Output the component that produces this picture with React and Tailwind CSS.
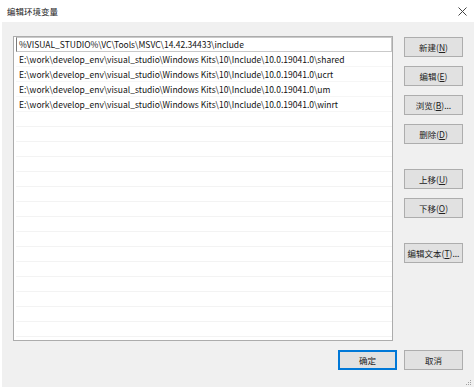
import React from "react";

const paths = [
    "%VISUAL_STUDIO%\\VC\\Tools\\MSVC\\14.42.34433\\include",
    "E:\\work\\develop_env\\visual_studio\\Windows Kits\\10\\Include\\10.0.19041.0\\shared",
    "E:\\work\\develop_env\\visual_studio\\Windows Kits\\10\\Include\\10.0.19041.0\\ucrt",
    "E:\\work\\develop_env\\visual_studio\\Windows Kits\\10\\Include\\10.0.19041.0\\um",
    "E:\\work\\develop_env\\visual_studio\\Windows Kits\\10\\Include\\10.0.19041.0\\winrt",
];

const font = {fontFamily: '"Noto Sans CJK SC", "Noto Sans", sans-serif'};

function Btn({label, hot, rest, className = ""}) {
    return (
        <button
            className={
                "w-[59px] h-[20px] bg-[#e1e1e1] border border-[#adadad] text-[8.5px] leading-none text-[#222] flex items-center justify-center whitespace-nowrap " +
                className
            }
        >
            {label}(<span className="underline">{hot}</span>){rest}
        </button>
    );
}

export default function App() {
    const emptyRows = Array.from({length: 15});

    return (
        <div
            className="w-[474px] h-[389px] bg-white flex flex-col overflow-hidden"
            style={font}
        >
            {/* title bar */}
            <div className="h-[22px] flex items-center justify-between pl-[7px] pr-[7px] shrink-0">
                <span className="text-[8.5px] text-[#222]">编辑环境变量</span>
                <svg width="9" height="9" viewBox="0 0 9 9">
                    <path d="M0.5 0.5 L8.5 8.5 M8.5 0.5 L0.5 8.5" stroke="#444" strokeWidth="1" />
                </svg>
            </div>

            {/* body */}
            <div className="flex-1 bg-[#f0f0f0] flex flex-col pt-[14px] pl-[13px] pr-[11px] mb-[2px] ml-[2px] relative">
                <div className="flex -ml-[2px]">
                    {/* list */}
                    <div className="w-[380px] h-[305px] bg-white border border-[#acacac] overflow-hidden pl-[2px]">
                        <div className="h-[15px] border border-[#c9c9c9] border-l-[#7a7a7a] pl-[2px] flex items-center text-[8.5px] text-[#111] leading-none whitespace-nowrap">
                            {paths[0]}
                        </div>
                        {paths.slice(1).map((p) => (
                            <div
                                key={p}
                                className="h-[15px] pl-[3px] flex items-center text-[8.5px] text-[#111] leading-none whitespace-nowrap border-b border-[#f6f6f6]"
                            >
                                {p}
                            </div>
                        ))}
                        {emptyRows.map((_, i) => (
                            <div key={i} className="h-[15px] border-b border-[#f3f3f3]"></div>
                        ))}
                    </div>

                    {/* side buttons */}
                    <div className="flex flex-col ml-[11px] pt-[1px]">
                        <Btn label="新建" hot="N" />
                        <Btn label="编辑" hot="E" className="mt-[9px]" />
                        <Btn label="浏览" hot="B" rest="..." className="mt-[9px]" />
                        <Btn label="删除" hot="D" className="mt-[9px]" />
                        <Btn label="上移" hot="U" className="mt-[25px]" />
                        <Btn label="下移" hot="O" className="mt-[9px]" />
                        <Btn label="编辑文本" hot="T" rest="..." className="mt-[25px]" />
                    </div>
                </div>

                {/* bottom buttons */}
                <div className="flex justify-end gap-[7px] mt-[9px]">
                    <button className="w-[59px] h-[20px] bg-[#e1e1e1] border-2 border-[#0078d7] text-[8.5px] leading-none text-[#222]">
                        确定
                    </button>
                    <button className="w-[59px] h-[20px] bg-[#e1e1e1] border border-[#adadad] text-[8.5px] leading-none text-[#222]">
                        取消
                    </button>
                </div>

                {/* size grip */}
                <svg className="absolute right-[2px] bottom-[1px]" width="8" height="8" viewBox="0 0 8 8">
                    <rect x="6" y="2" width="1" height="1" fill="#a0a0a0" />
                    <rect x="4" y="4" width="1" height="1" fill="#a0a0a0" />
                    <rect x="6" y="4" width="1" height="1" fill="#a0a0a0" />
                    <rect x="2" y="6" width="1" height="1" fill="#a0a0a0" />
                    <rect x="4" y="6" width="1" height="1" fill="#a0a0a0" />
                    <rect x="6" y="6" width="1" height="1" fill="#a0a0a0" />
                </svg>
            </div>
        </div>
    );
}
